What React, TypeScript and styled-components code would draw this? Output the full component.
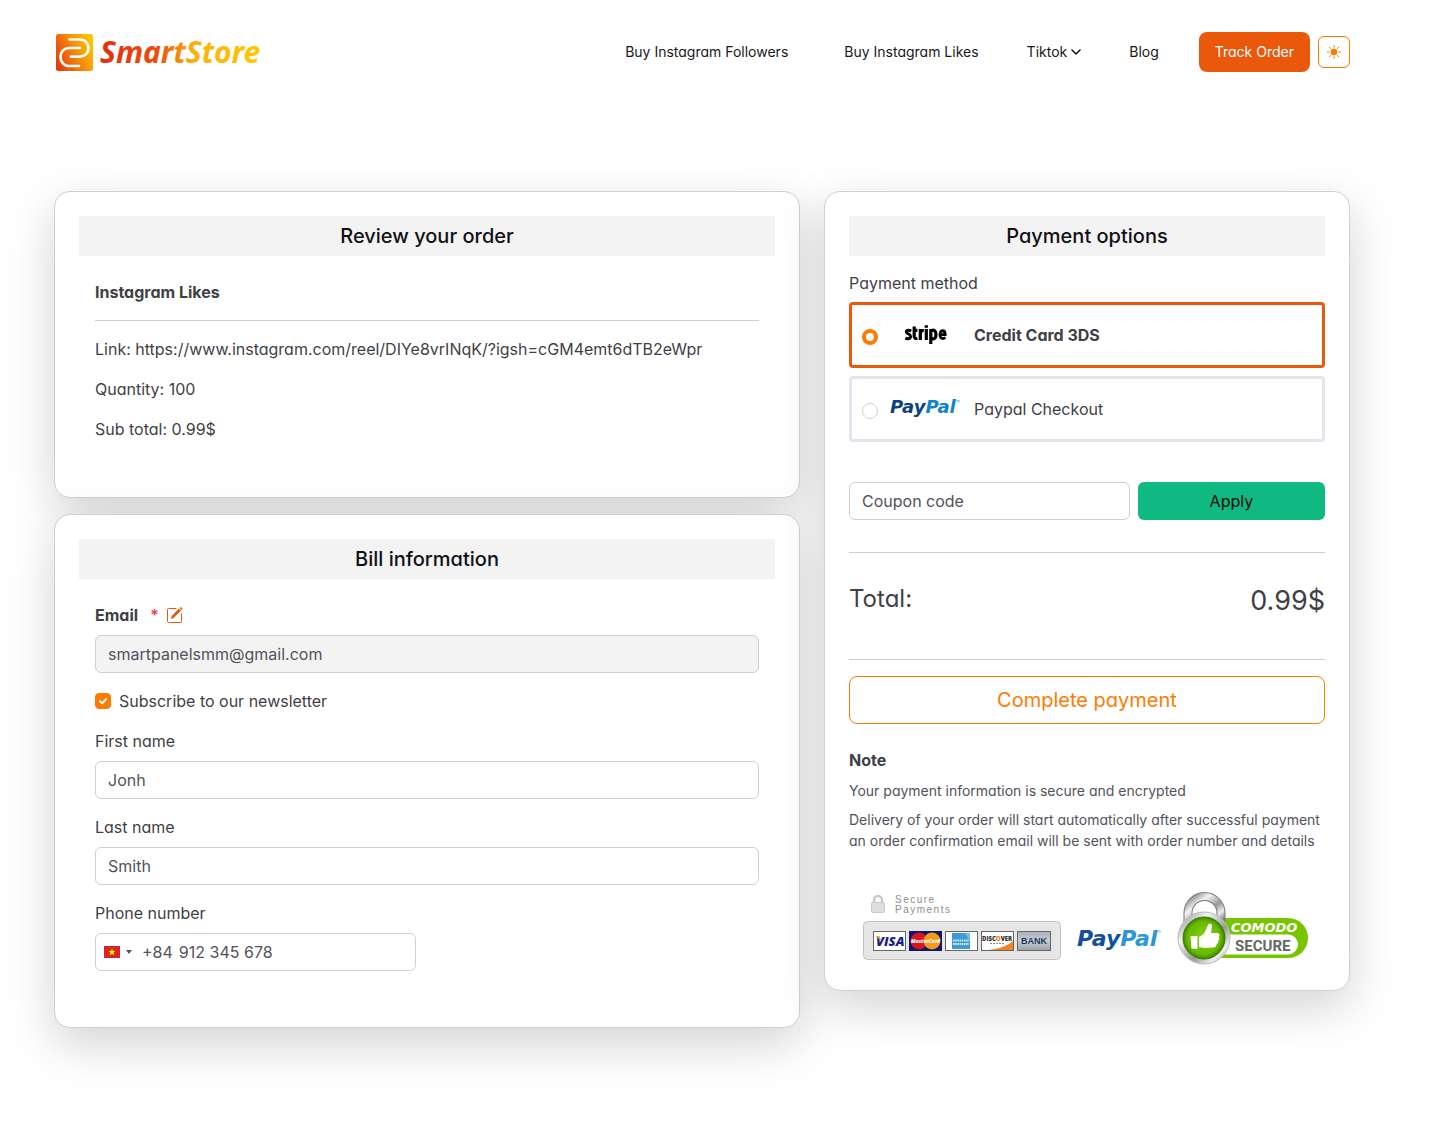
import React, { useState } from "react";
import styled, { createGlobalStyle, css } from "styled-components";

const GlobalStyle = createGlobalStyle`
  *, *::before, *::after { box-sizing: border-box; }
  body {
    margin: 0;
    background: #fff;
    color: #3f3f46;
    font-family: Inter, "Liberation Sans", sans-serif;
    font-size: 16px;
    line-height: 24px;
    font-feature-settings: "cv11";
  }
  p, h1, h2, h3 { margin: 0; }
  a { color: inherit; text-decoration: none; }
  button, input { font-family: inherit; font-size: inherit; line-height: inherit; margin: 0; }
  button { cursor: pointer; font-feature-settings: inherit; }
  svg { display: block; flex: none; }
`;

const Page = styled.div`
  padding: 0 82px 80px 54px;
  @media (max-width: 1000px) { padding: 0 24px 48px; }
`;

const Container = styled.div`
  max-width: 1296px;
  margin: 0 auto;
`;

const Header = styled.header`
  display: flex;
  align-items: center;
  justify-content: space-between;
  flex-wrap: wrap;
  padding: 32px 0;
  margin-bottom: 87px;
`;

const Nav = styled.nav`
  display: flex;
  align-items: center;
  font-size: 14px;
  line-height: 20px;
  color: #18181b;
`;

const NavLink = styled.a<{ $wide?: boolean }>`
  display: flex;
  align-items: center;
  gap: 4px;
  margin-right: ${(p) => (p.$wide ? 56 : 48)}px;
`;

const LastLink = styled(NavLink)`
  margin-right: 40px;
`;

const TrackButton = styled.a`
  height: 40px;
  padding: 10px 16px;
  border-radius: 8px;
  background: #ea580c;
  color: #fff;
  font-weight: 400;
`;

const ThemeButton = styled.button`
  display: flex;
  align-items: center;
  justify-content: center;
  width: 32px;
  height: 32px;
  margin-left: 8px;
  padding: 0;
  border: 1px solid #ff7a00;
  border-radius: 6px;
  background: #fff;
`;

const Columns = styled.main`
  display: grid;
  grid-template-columns: minmax(0, 7fr) minmax(0, 5fr);
  margin: 0 -12px;
  @media (max-width: 1000px) { grid-template-columns: minmax(0, 1fr); }
`;

const Column = styled.div`
  display: flex;
  flex-direction: column;
  gap: 16px;
  padding: 0 12px;
`;

const Card = styled.section`
  padding: 24px;
  border: 1px solid #d0d0d2;
  border-radius: 16px;
  background: #fff;
  box-shadow: 0 16px 48px rgba(0, 0, 0, 0.175);
`;

const CardTitle = styled.h2`
  padding: 6px;
  background: #f3f3f4;
  color: #111114;
  font-size: 20px;
  line-height: 28px;
  font-weight: 500;
  text-align: center;
`;

const CardBody = styled.div`
  display: flex;
  flex-direction: column;
  gap: 16px;
  padding: 24px 16px 32px;
`;

const Strong = styled.h3`
  font-size: 16px;
  line-height: 24px;
  font-weight: 700;
`;

const Rule = styled.hr`
  width: 100%;
  margin: 0;
  border: 0;
  border-top: 1px solid #cfcfd1;
`;

const Field = styled.div`
  display: flex;
  flex-direction: column;
  gap: 8px;
`;

const LabelRow = styled.div`
  display: flex;
  align-items: center;
`;

const FieldLabel = styled.label<{ $bold?: boolean }>`
  font-weight: ${(p) => (p.$bold ? 700 : 400)};
`;

const Required = styled.span`
  margin: 0 8px 0 12px;
  color: #f43f5e;
  font-weight: 700;
`;

const EditButton = styled.button`
  padding: 0;
  border: 0;
  background: none;
`;

const box = css`
  height: 38px;
  border: 1px solid #d0d0d2;
  border-radius: 6px;
  background: #fff;
  color: #52525b;
`;

const TextInput = styled.input`
  ${box}
  width: 100%;
  min-width: 0;
  padding: 6px 12px;
  outline: none;
  &:read-only { background: #f3f3f4; }
  &::placeholder { color: #52525b; opacity: 1; }
`;

const CheckLabel = styled.label`
  display: flex;
  align-items: center;
  gap: 8px;
  padding: 0;
`;

const check = encodeURIComponent(
  '<svg xmlns="http://www.w3.org/2000/svg" viewBox="0 0 16 16"><path d="M5 8.2l2.2 2.2L11.2 6" fill="none" stroke="white" stroke-width="2" stroke-linecap="round" stroke-linejoin="round"/></svg>'
);

const Checkbox = styled.input`
  appearance: none;
  width: 16px;
  height: 16px;
  border: 1px solid #d0d0d2;
  border-radius: 4px;
  &:checked {
    border-color: #ff7a00;
    background: #ff7a00 url("data:image/svg+xml,${check}") center / 16px 16px;
  }
`;

const PhoneBox = styled.div`
  ${box}
  display: flex;
  align-items: center;
  width: 321px;
  max-width: 100%;
  padding: 0 8px;
`;

const CountryButton = styled.button`
  display: flex;
  align-items: center;
  gap: 6px;
  padding: 0;
  border: 0;
  background: none;
`;

const DialCode = styled.span`
  margin: 0 6px 0 10px;
`;

const PhoneInput = styled.input`
  flex: 1;
  min-width: 0;
  padding: 0;
  border: 0;
  outline: 0;
  background: none;
  color: inherit;
`;

const Methods = styled.fieldset`
  display: flex;
  flex-direction: column;
  gap: 8px;
  min-width: 0;
  margin: 15px 0 40px;
  padding: 0;
  border: 0;
`;

const Legend = styled.legend`
  padding: 0 0 7px;
`;

const Method = styled.label<{ $active: boolean }>`
  display: flex;
  align-items: center;
  height: 66px;
  padding: 0 10px;
  border: 3px solid ${(p) => (p.$active ? "#ea580c" : "#e4e4ec")};
  border-radius: 4px;
  font-weight: ${(p) => (p.$active ? 700 : 400)};
  cursor: pointer;
`;

const Radio = styled.input`
  appearance: none;
  width: 16px;
  height: 16px;
  margin: 4px 12px 0 0;
  border: 1px solid #d0d0d2;
  border-radius: 50%;
  background: #fff;
  &:checked { border: 4px solid #ff7a00; }
`;

const MethodName = styled.span`
  margin-left: 14px;
`;

const Coupon = styled.form`
  display: grid;
  grid-template-columns: minmax(0, 3fr) minmax(0, 2fr);
  gap: 8px;
  margin-bottom: 32px;
`;

const ApplyButton = styled.button`
  height: 38px;
  border: 0;
  border-radius: 6px;
  background: #10b981;
  color: #09090b;
`;

const Total = styled.div`
  display: flex;
  justify-content: space-between;
  align-items: flex-start;
  padding: 24px 0 34px;
  font-size: 24px;
  line-height: 44px;
`;

const Amount = styled.strong`
  font-size: 27px;
  line-height: 48px;
  font-weight: 400;
`;

const PayButton = styled.button`
  width: 100%;
  height: 48px;
  margin: 16px 0 24px;
  border: 1px solid #ff7a00;
  border-radius: 8px;
  background: #fff;
  color: #ff7a00;
  font-size: 20px;
`;

const Notes = styled.div`
  display: flex;
  flex-direction: column;
  gap: 8px;
  font-size: 14px;
  line-height: 21px;
  color: #52525b;
  ${Strong} { color: #3f3f46; }
`;

const Badges = styled.div`
  display: flex;
  flex-wrap: wrap;
  justify-content: space-between;
  margin-top: 40px;
  padding: 0 16px 0 14px;
`;

function Logo() {
  return (
    <svg width="220" height="40" viewBox="0 0 220 40" role="img" aria-label="SmartStore">
      <defs>
        <linearGradient id="mark" x1="0" y1="0.8" x2="1" y2="0.3">
          <stop offset="0" stopColor="#e8380d" />
          <stop offset="0.55" stopColor="#f58a0b" />
          <stop offset="1" stopColor="#ffc300" />
        </linearGradient>
        <linearGradient id="word" gradientUnits="userSpaceOnUse" x1="46" y1="0" x2="206" y2="0">
          <stop offset="0" stopColor="#e42f0c" />
          <stop offset="0.35" stopColor="#ea4c0d" />
          <stop offset="0.58" stopColor="#fbb00b" />
          <stop offset="1" stopColor="#ffc800" />
        </linearGradient>
      </defs>
      <rect x="2" y="2" width="37" height="37" rx="2.5" fill="url(#mark)" />
      <path
        d="M15.500 7.500H26c5 0 8.500 3.700 8.500 8.500s-3.500 8.700-8.500 8.700h-9M26 16H15c-5 0-8.500 3.900-8.500 8.900S10 34 15 34h10"
        fill="none"
        stroke="#fff"
        strokeWidth="2.700"
        strokeLinecap="round"
      />
      <text x="46" y="31" fontFamily='"Noto Sans", "Open Sans", sans-serif' fontSize="30" fontWeight="700" fontStyle="italic" fill="url(#word)">
        SmartStore
      </text>
    </svg>
  );
}

interface PayPalProps {
  width: number;
  height: number;
  size: number;
  baseline: number;
  dark: string;
  light: string;
}

function PayPalLogo({ width, height, size, baseline, dark, light }: PayPalProps) {
  return (
    <svg width={width} height={height} viewBox={`0 0 ${width} ${height}`} role="img" aria-label="PayPal">
      <text x="0" y={baseline} fontFamily='"DejaVu Sans", Verdana, sans-serif' fontSize={size} fontWeight="700" fontStyle="italic" fill={dark}>
        Pay<tspan fill={light}>Pal</tspan>
      </text>
      <path d={`M${width - 4} ${baseline - size * 0.7}h2m-1 0v2m1.500 0v-2l.7 1 .7-1v2`} fill="none" stroke={light} strokeWidth="0.400" />
    </svg>
  );
}

function StripeLogo() {
  return (
    <svg width="70" height="30" viewBox="0 0 70 30" role="img" aria-label="stripe">
      <g fill="none" stroke="#000" strokeWidth="3.200">
        <path d="M21.300 10.800c-3.300-1.200-5.300-.3-4.800 1.500.5 1.700 4.100 1.500 4.100 4.200 0 2.300-2.800 2.800-5.300 1.700" strokeWidth="2.900" />
        <path d="M24.200 6.500v9.800c0 2.400 1.300 2.500 3.200 1.900M23 10.400h4.400" />
        <path d="M30.300 20V9M30.300 14c0-3 1.500-3.700 3.500-3.300M36.300 20V9M36.300 5.200v2.600" />
        <path d="M40.800 24V9M41 11c2.800-1.700 5-.5 5 3.500s-2.200 5.200-5 3.500" />
        <path d="M50 14.600h5.200c0-5-5.200-5.300-5.200 0 0 4.300 2.600 4.500 5.500 3.200" strokeWidth="2.800" />
      </g>
    </svg>
  );
}

function SecurePayments() {
  return (
    <svg width="198" height="75" viewBox="0 1 198 75" role="img" aria-label="Secure payments: Visa, MasterCard, American Express, Discover, bank">
      <defs>
        <linearGradient id="bank" x1="0" y1="0" x2="0" y2="1">
          <stop offset="0" stopColor="#a9b0b8" />
          <stop offset="0.5" stopColor="#c7ccd1" />
          <stop offset="1" stopColor="#9ba2aa" />
        </linearGradient>
      </defs>
      <path d="M11 14v-4a4 4 0 0 1 8 0v4" fill="none" stroke="#c8c8c8" strokeWidth="2.400" />
      <rect x="8.500" y="12.500" width="13" height="10" rx="1" fill="#dedede" stroke="#c8c8c8" />
      <g fontFamily='"Liberation Sans", Arial, sans-serif' fontSize="10" fill="#8d8d8d" letterSpacing="1.5">
        <text x="32" y="13">Secure</text>
        <text x="32" y="23">Payments</text>
      </g>
      <rect x="0.500" y="31.500" width="197" height="38" rx="4" fill="#e6e6e6" stroke="#c2c2c2" />
      {[10, 46, 82, 118, 154].map((x) => (
        <rect key={x} x={x + 0.5} y="41.500" width={x === 154 ? 33 : 32} height="19" fill={x === 154 ? "url(#bank)" : "#fff"} stroke="#666" />
      ))}
      <g fontFamily='"Open Sans", sans-serif' fontWeight="800">
        <text x="13" y="56" fontSize="13" fontStyle="italic" fill="#1a1f8c">VISA</text>
        <path d="M12.500 46h4l2 5z" fill="#f6a11a" />
        <rect x="46" y="41" width="33" height="20" fill="#0b1a6c" />
        <circle cx="56" cy="51" r="8.500" fill="#d9141e" />
        <circle cx="69" cy="51" r="8.500" fill="#f79a1c" />
        <text x="48" y="53" fontSize="5" fontStyle="italic" fill="#fff">MasterCard</text>
        <rect x="89" y="43" width="18" height="16" fill="#3b9ad8" />
        <path d="M94 43l8 0 5 9V43zM89 52h18" fill="#77bce8" />
        <path d="M90 50.500h16M90 54h16" stroke="#d8eefb" strokeWidth="2" strokeDasharray="1.500 .7" />
        <path d="M150 51v9h-25c11-1 19-4 25-9z" fill="#f58220" />
        <text x="119" y="50.500" fontSize="6" fill="#333">DISC<tspan fill="#f58220">O</tspan>VER</text>
        <path d="M127 53.500h14" stroke="#888" strokeWidth="1" strokeDasharray="2 1" />
        <text x="158" y="54" fontSize="9" fontFamily='"Liberation Sans", Arial, sans-serif' fontWeight="700" fill="#243863">BANK</text>
      </g>
    </svg>
  );
}

function ComodoSecure() {
  return (
    <svg width="132" height="75" viewBox="0 1 132 75" role="img" aria-label="Comodo secure">
      <defs>
        <linearGradient id="steel" x1="0" y1="0" x2="1" y2="1">
          <stop offset="0" stopColor="#777" />
          <stop offset="0.3" stopColor="#f4f4f4" />
          <stop offset="0.6" stopColor="#999" />
          <stop offset="0.8" stopColor="#eee" />
          <stop offset="1" stopColor="#777" />
        </linearGradient>
        <radialGradient id="green">
          <stop offset="0" stopColor="#8bd313" />
          <stop offset="0.8" stopColor="#65b800" />
          <stop offset="1" stopColor="#398200" />
        </radialGradient>
      </defs>
      <path d="M36 28h75a20 20 0 0 1 0 40H36z" fill="#77c500" />
      <path d="M36 44.500h75a10 10 0 0 1 0 20H36z" fill="#fff" />
      <path d="M11 32V23a16.500 16.500 0 0 1 33 0v9" fill="none" stroke="#777" strokeWidth="9" />
      <path d="M11 32V23a16.500 16.500 0 0 1 33 0v9" fill="none" stroke="url(#steel)" strokeWidth="7" />
      <circle cx="27" cy="48" r="26" fill="url(#steel)" stroke="#bbb" strokeWidth="1" />
      <circle cx="27" cy="48" r="21" fill="url(#green)" stroke="#3c7800" strokeWidth="1" />
      <path d="M13.500 46h7v13l-6-.5zM22 47l5-3 4-9c1-2 4-1.500 4 1l-1 7h6c3 0 3 3 1.500 4 1.500 1 1 3-.5 3.500 1 1.500 0 3-1.500 3.500.5 2-1 3.500-3 3.500l-8 .5-6.500-1z" fill="#fff" />
      <text x="54" y="42" fontFamily='"DejaVu Sans", sans-serif' fontSize="13" fontWeight="700" fontStyle="italic" fill="#fff">COMODO</text>
      <text x="58" y="61" fontFamily='"Liberation Sans Narrow", Roboto, sans-serif' fontSize="15" fontWeight="700" fill="#666">SECURE</text>
    </svg>
  );
}

const SunIcon = () => (
  <svg width="14" height="14" viewBox="0 0 14 14" aria-hidden="true">
    <circle cx="7" cy="7" r="3.300" fill="#ff7a00" />
    <path d="M7 0v2.500M7 11.500V14M0 7h2.500M11.500 7H14M2 2l1.700 1.700M10.300 10.300L12 12M2 12l1.700-1.700M10.300 3.700L12 2" stroke="#ff7a00" strokeWidth="1" />
  </svg>
);

const EditIcon = () => (
  <svg width="16" height="16" viewBox="0 0 16 16" aria-hidden="true">
    <path d="M9.500 1.500H1.500a1 1 0 0 0-1 1v12a1 1 0 0 0 1 1h12a1 1 0 0 0 1-1V6.500" fill="none" stroke="#ea580c" />
    <path d="M12 1.600l2 2L6.500 11 3.800 12l.9-2.900zM12.700.9l.7-.7a.6.6 0 0 1 .8 0l1.200 1.200a.6.6 0 0 1 0 .8l-.7.7z" fill="#ea580c" />
  </svg>
);

const methods = [
  { id: "stripe", name: "Credit Card 3DS", logo: <StripeLogo /> },
  {
    id: "paypal",
    name: "Paypal Checkout",
    logo: <PayPalLogo width={70} height={26} size={18} baseline={17} dark="#0b427c" light="#0f86cb" />,
  },
];

export default function App() {
  const [method, setMethod] = useState("stripe");
  return (
    <Page>
      <GlobalStyle />
      <Container>
        <Header>
          <a href="#"><Logo /></a>
          <Nav>
            <NavLink href="#" $wide>Buy Instagram Followers</NavLink>
            <NavLink href="#">Buy Instagram Likes</NavLink>
            <NavLink href="#">
              Tiktok
              <svg width="10" height="10" viewBox="0 0 10 10" aria-hidden="true">
                <path d="M1 3l4 4 4-4" fill="none" stroke="#18181b" strokeWidth="1.600" strokeLinecap="round" strokeLinejoin="round" />
              </svg>
            </NavLink>
            <LastLink href="#">Blog</LastLink>
            <TrackButton href="#">Track Order</TrackButton>
            <ThemeButton aria-label="Toggle theme"><SunIcon /></ThemeButton>
          </Nav>
        </Header>
        <Columns>
          <Column>
            <Card>
              <CardTitle>Review your order</CardTitle>
              <CardBody>
                <Strong>Instagram Likes</Strong>
                <Rule />
                <p>Link: https://www.instagram.com/reel/DIYe8vrINqK/?igsh=cGM4emt6dTB2eWpr</p>
                <p>Quantity: 100</p>
                <p>Sub total: 0.99$</p>
              </CardBody>
            </Card>
            <Card>
              <CardTitle>Bill information</CardTitle>
              <CardBody>
                <Field>
                  <LabelRow>
                    <FieldLabel htmlFor="email" $bold>Email</FieldLabel>
                    <Required>*</Required>
                    <EditButton aria-label="Edit email"><EditIcon /></EditButton>
                  </LabelRow>
                  <TextInput id="email" type="email" readOnly value="smartpanelsmm@gmail.com" />
                </Field>
                <CheckLabel>
                  <Checkbox type="checkbox" defaultChecked />
                  Subscribe to our newsletter
                </CheckLabel>
                <Field>
                  <FieldLabel htmlFor="first">First name</FieldLabel>
                  <TextInput id="first" defaultValue="Jonh" />
                </Field>
                <Field>
                  <FieldLabel htmlFor="last">Last name</FieldLabel>
                  <TextInput id="last" defaultValue="Smith" />
                </Field>
                <Field>
                  <FieldLabel htmlFor="phone">Phone number</FieldLabel>
                  <PhoneBox>
                    <CountryButton aria-label="Country: Vietnam">
                      <svg width="16" height="12" viewBox="0 0 16 12" aria-hidden="true">
                        <rect width="16" height="12" fill="#da251d" />
                        <path d="M8 2.500l.9 2.500h2.500L9.400 6.600l.8 2.600L8 7.700 5.800 9.200l.8-2.600-2-1.600h2.500z" fill="#ff0" />
                      </svg>
                      <svg width="6" height="4" viewBox="0 0 6 4" aria-hidden="true"><path d="M0 0h6L3 4z" fill="#555" /></svg>
                    </CountryButton>
                    <DialCode>+84</DialCode>
                    <PhoneInput id="phone" type="tel" defaultValue="912 345 678" />
                  </PhoneBox>
                </Field>
              </CardBody>
            </Card>
          </Column>
          <Column>
            <Card>
              <CardTitle>Payment options</CardTitle>
              <Methods>
                <Legend>Payment method</Legend>
                {methods.map((m) => (
                  <Method key={m.id} $active={method === m.id}>
                    <Radio type="radio" name="method" checked={method === m.id} onChange={() => setMethod(m.id)} />
                    {m.logo}
                    <MethodName>{m.name}</MethodName>
                  </Method>
                ))}
              </Methods>
              <Coupon onSubmit={(e) => e.preventDefault()}>
                <TextInput aria-label="Coupon code" placeholder="Coupon code" />
                <ApplyButton>Apply</ApplyButton>
              </Coupon>
              <Rule />
              <Total>
                <span>Total:</span>
                <Amount>0.99$</Amount>
              </Total>
              <Rule />
              <PayButton>Complete payment</PayButton>
              <Notes>
                <Strong>Note</Strong>
                <p>Your payment information is secure and encrypted</p>
                <p>Delivery of your order will start automatically after successful payment an order confirmation email will be sent with order number and details</p>
              </Notes>
              <Badges>
                <SecurePayments />
                <PayPalLogo width={84} height={75} size={22} baseline={55} dark="#12509b" light="#2b97d8" />
                <ComodoSecure />
              </Badges>
            </Card>
          </Column>
        </Columns>
      </Container>
    </Page>
  );
}
